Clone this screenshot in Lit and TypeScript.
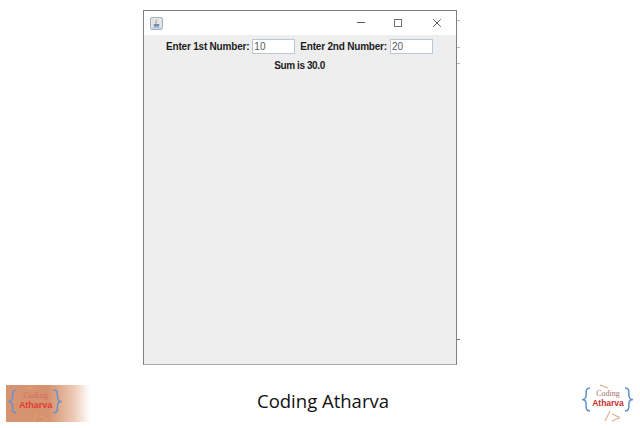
import { LitElement, html, css, svg } from "lit";
import { customElement } from "lit/decorators.js";

const logoMarks = (coding: string, atharva: string, brace: string) => svg`
  <path d="M12 4 C7 4 8.500 8 8 12 C7.700 14.500 6.500 15.500 4 15.500 C6.500 15.500 7.700 16.500 8 19 C8.500 23 7 27 12 27" fill="none" stroke="${brace}" stroke-width="1.500"/>
  <path d="M47 4 C52 4 50.500 8 51 12 C51.300 14.500 52.500 15.500 55 15.500 C52.500 15.500 51.300 16.500 51 19 C50.500 23 52 27 47 27" fill="none" stroke="${brace}" stroke-width="1.500"/>
  <text x="30" y="12" text-anchor="middle" class="coding" fill="${coding}">Coding</text>
  <text x="30" y="22" text-anchor="middle" class="atharva" fill="${atharva}">Atharva</text>
  <path d="M27 37 L32 27 M34 30 L42 33.500 L34 37 M22 1 L30 4" fill="none" stroke="#e0a070" stroke-width="1"/>
`;

@customElement("app-root")
export class AppRoot extends LitElement {
  static styles = css`
    :host {
      display: flex;
      flex-direction: column;
      width: 640px;
      height: 428px;
      background: #fff;
      font-family: "Liberation Sans", Arial, sans-serif;
      overflow: hidden;
    }
    .stage {
      padding: 10px 0 0 143px;
      height: 365px;
      flex: none;
      box-sizing: border-box;
      display: flex;
    }
    .window {
      position: relative;
      width: 314px;
      height: 355px;
      box-sizing: border-box;
      border: 1px solid #808080;
      border-bottom-color: #a8a8a8;
      background: #eeeeee;
      display: flex;
      flex-direction: column;
    }
    .tick {
      position: absolute;
      left: 313px;
      width: 3px;
      height: 1px;
      background: #b4b4b4;
    }
    .t1 { top: 9px; }
    .t2 { top: 36px; }
    .t3 { top: 52px; }
    .t4 { top: 328px; background: #707070; }
    .titlebar {
      height: 24px;
      background: #fff;
      display: flex;
      align-items: center;
      padding: 0 15px 0 6px;
    }
    .appicon {
      width: 13px;
      height: 13px;
      box-sizing: border-box;
      border: 1px solid #a9b0b8;
      border-radius: 2px;
      background: #dfe5ec;
      display: block;
    }
    .controls {
      margin-left: auto;
      display: flex;
      align-items: center;
    }
    .controls svg {
      display: block;
      width: 8px;
      height: 8px;
    }
    .min { margin-right: 29px; }
    .max { margin-right: 31px; }
    .row {
      display: flex;
      justify-content: center;
      align-items: center;
      height: 15px;
      margin-top: 4px;
      padding-right: 1px;
    }
    label, .sum {
      font-size: 10px;
      letter-spacing: -0.200px;
      font-weight: 700;
      color: #1c1c1c;
      white-space: nowrap;
    }
    .field {
      width: 43px;
      height: 15px;
      box-sizing: border-box;
      border: 1px solid #b9c7d6;
      background: #fff;
      color: #5a5a5a;
      font: 10px "Liberation Sans", Arial, sans-serif;
      padding: 0 1px;
      line-height: 13px;
      margin: 0 5px 0 3px;
    }
    .field:last-child { margin-right: 0; }
    .sum {
      text-align: center;
      letter-spacing: -0.400px;
      margin-top: 5px;
      line-height: 14px;
      padding-right: 1px;
    }
    .footer {
      flex: 1;
      display: flex;
      align-items: flex-start;
      padding: 20px 2px 0 6px;
    }
    .brand {
      width: 84px;
      height: 37px;
      background: linear-gradient(90deg, #d89470 0%, #d5926e 50%, #ecc8b4 80%, #ffffff 100%);
      display: block;
    }
    .title {
      flex: 1;
      text-align: center;
      font-family: "Open Sans", sans-serif;
      font-size: 18.500px;
      line-height: 32px;
      color: #111;
      padding-right: 22px;
    }
    .logo {
      width: 60px;
      height: 40px;
      display: block;
      margin-top: -1px;
    }
    .coding { font: 8px "Liberation Serif", serif; }
    .atharva { font: 700 8.500px "Liberation Sans", sans-serif; }
  `;

  render() {
    return html`
      <div class="stage">
        <div class="window">
          <i class="tick t1"></i>
          <i class="tick t2"></i>
          <i class="tick t3"></i>
          <i class="tick t4"></i>
          <div class="titlebar">
            <svg class="appicon" viewBox="0 0 11 11">
              <path d="M5.500 1 C7 3 4.500 3.500 6 5.500 L4.500 5.500 C3.500 4 5.500 3 5.500 1Z" fill="#e88a3a"/>
              <path d="M2.500 6 H8.500 L7.800 8.800 H3.200Z" fill="#6d8fb8"/>
              <path d="M1.500 9.800 H9.500" stroke="#8aa3c0" stroke-width="0.800"/>
            </svg>
            <div class="controls">
              <svg class="min" viewBox="0 0 8 8"><path d="M0 3.500 H8" stroke="#5a5a5a" stroke-width="1"/></svg>
              <svg class="max" viewBox="0 0 8 8"><rect x="0.500" y="0.500" width="7" height="7" fill="none" stroke="#707070"/></svg>
              <svg viewBox="0 0 8 8"><path d="M0.200 0.200 L7.800 7.800 M7.800 0.200 L0.200 7.800" stroke="#4a4a4a" stroke-width="0.900"/></svg>
            </div>
          </div>
          <div class="row">
            <label>Enter 1st Number:</label>
            <div class="field">10</div>
            <label>Enter 2nd Number:</label>
            <div class="field">20</div>
          </div>
          <div class="sum">Sum is 30.0</div>
        </div>
      </div>
      <div class="footer">
        <svg class="brand" viewBox="0 0 84 37">
          <g transform="translate(-2 1) scale(1.050 1)">${logoMarks("#d9685f", "#e23c32", "#6a90d2")}</g>
        </svg>
        <div class="title">Coding Atharva</div>
        <svg class="logo" viewBox="0 0 60 40">${logoMarks("#a87068", "#c4302c", "#5f8fc8")}</svg>
      </div>
    `;
  }
}
